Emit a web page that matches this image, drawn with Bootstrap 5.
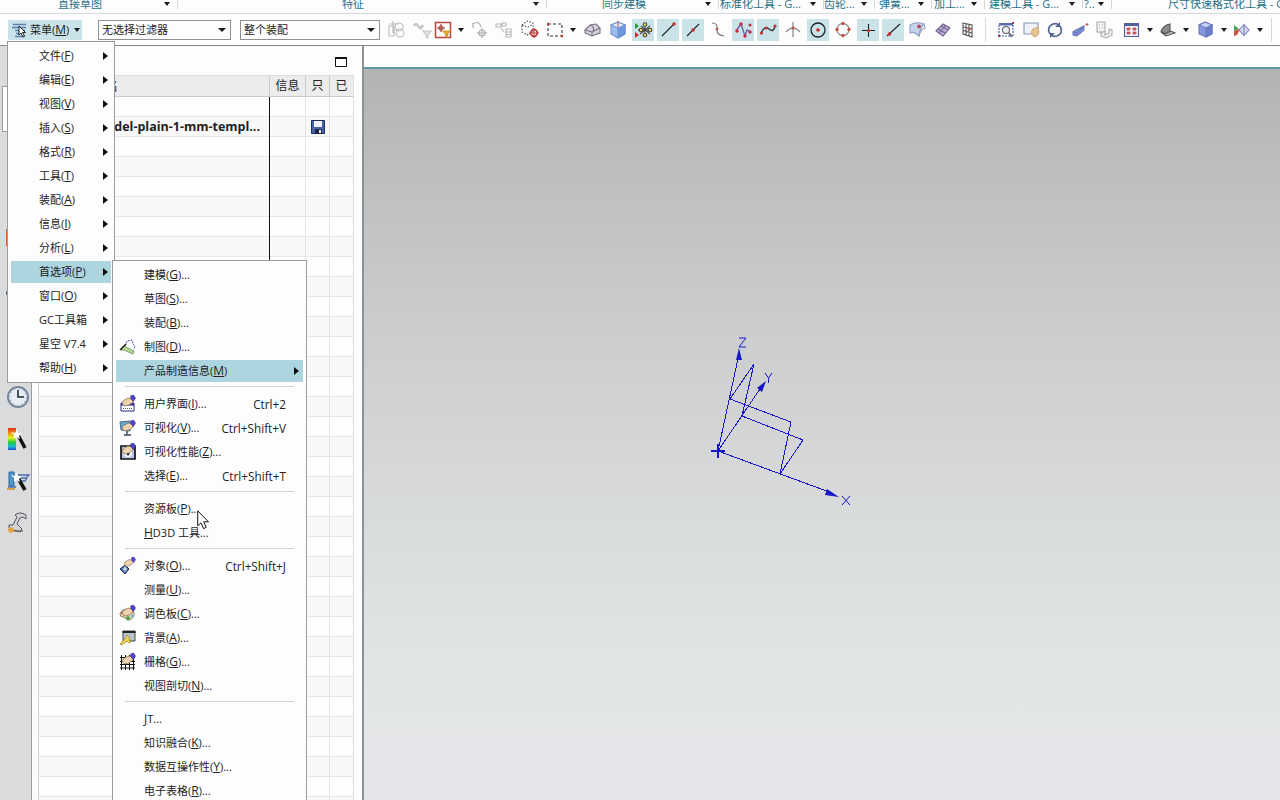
<!DOCTYPE html>
<html lang="zh-CN">
<head>
<meta charset="utf-8">
<title>NX</title>
<link href="https://cdn.jsdelivr.net/npm/bootstrap@5.3.0/dist/css/bootstrap.min.css" rel="stylesheet">
<style>
body{width:1280px;height:800px;overflow:hidden;background:#fdfdfd;color:#222;font:11px/16px "Open Sans","Noto Sans CJK SC",sans-serif}
svg{display:block;overflow:visible}
u{text-underline-offset:1px;font-size:12px}
.ribbon{height:14px;border-bottom:1px solid #d5d8da;display:grid;grid-template-columns:178px 369px 172px 105px 51px 57px 53px 98px 29px 1fr;color:#1d7086}
.grp{border-right:1px solid #d5d8da;height:9px;line-height:10px;white-space:nowrap;padding-right:7px}
.grp .lbl{margin-top:-1px}
.grp .caret{margin-top:2px}
.caret{width:0;height:0;border:3px solid transparent;border-top:4px solid #1a1a1a;border-bottom:0}
.toolbar{height:32px;border-bottom:1px solid #85898c}
.menu-btn{margin-left:8px;width:74px;height:20px;background:#c9e3e8;padding:0 2px 0 3px}
.combo{height:20px;border:1px solid #8f9193;padding:0 4px 0 3px;background:#fdfdfd}
.combo .caret{border-width:4px 4px 0}
.icons{display:grid;grid-template-columns:24px 28px 14px 20px 20px 28px 24px 26px 8px 4px repeat(16,25px) 10px 32px 18px 30px 20px 28px 26px 10px 28px 6px 34px 2px 34px 2px 22px;justify-items:center;align-items:center;height:31px;margin-left:4px}
.icons svg{width:22px;height:22px;fill:none;stroke-width:1.1}
.icons .on{background:#c9e3e8}
.icons .caret{position:relative;left:1px}
.vr1{width:1px;height:24px;background:#d5d8da}
.rail{width:32px;background:#dadbdc;border-right:1px solid #9a9c9e;padding-top:337px}
.rail svg{margin:0 0 16px 6px}
.part-nav{width:332px;border-right:2px solid #8b9297;padding-left:6px;background:#fdfdfd}
.tree{width:316px;border-left:1px solid #cfd1d3;border-right:1px solid #dcdee0}
.trow{display:grid;grid-template-columns:231px 36px 24px 1fr;height:20px;border-bottom:1px solid #e6e7e8}
.trow:nth-child(odd){background:#f8f8f8}
.trow>div{border-right:1px solid #e3e4e6;display:flex;align-items:center;justify-content:center}
.trow>div:first-child{border-right-color:#111;margin-bottom:-1px}
.trow>div:last-child{border-right:0}
.trow.thead-row{height:22px;background:#ececec;border-top:1px solid #dcdcdc;border-bottom:1px solid #ccc;font-size:12px}
.trow.thead-row>div,.trow.thead-row>div:first-child{border-right-color:#c9cbcd}
.part-name{font-weight:700;font-size:12.5px;white-space:nowrap}
.scene{background:linear-gradient(#b2b4b4 0,#c0c2c2 18%,#cbcdce 36%,#d7d9da 58%,#e2e5e6 81%,#e5e6e9 100%);border-top:2px solid #5d97a5}
.pop{position:absolute;background:#fdfdfd;border:1px solid #9a9c9e;padding:2px 3px}
.mi{height:24px;display:flex;align-items:center;padding:0 3px 0 28px;white-space:nowrap;border:solid #fdfdfd;border-width:1px 0}
.mi.hot{background:#acd5df}
.tri{margin-left:auto;border:4px solid transparent;border-left:5px solid #111;border-right:0}
.pop2 .mi{padding-right:17px}
.pop2 .mi.hot{padding-right:4px}
.pop2 .mi svg{width:18px;height:18px;margin:0 7px 0 -25px}
.key{margin-left:auto;font-size:11.75px}
.rule{height:9px;padding:3px 9px 0}
.rule:before{content:"";display:block;border-top:1px solid #cfd1d3}
</style>
</head>
<body class="d-flex flex-column position-relative">
<svg width="0" height="0" class="position-absolute"><defs>
<g id="hand"><path d="M4 6l5-3 4 1 1 3-4 3-4 1-3-2z" fill="#ecd2ae" stroke="#8a6d4a" stroke-width=".7"/><path d="M11.500 1l3-1 2 3-2 3.500-2.500-2.500z" fill="#5145c8" stroke="#29238e" stroke-width=".5"/></g>
</defs></svg>

<div class="ribbon flex-shrink-0">
<div class="grp d-flex justify-content-between" style="padding-left:58px"><span class="lbl">直接草图</span><i class="caret"></i></div>
<div class="grp d-flex justify-content-between" style="padding-left:164px"><span class="lbl">特征</span><i class="caret"></i></div>
<div class="grp d-flex justify-content-between" style="padding-left:55px"><span class="lbl">同步建模</span><i class="caret"></i></div>
<div class="grp d-flex justify-content-between" style="padding-left:1px"><span class="lbl">标准化工具 - G...</span><i class="caret"></i></div>
<div class="grp d-flex justify-content-between ps-0"><span class="lbl">齿轮...</span><i class="caret"></i></div>
<div class="grp d-flex justify-content-between" style="padding-left:4px"><span class="lbl">弹簧...</span><i class="caret"></i></div>
<div class="grp d-flex justify-content-between" style="padding-left:2px"><span class="lbl">加工...</span><i class="caret"></i></div>
<div class="grp d-flex justify-content-between" style="padding-left:4px"><span class="lbl">建模工具 - G...</span><i class="caret"></i></div>
<div class="grp d-flex justify-content-between" style="padding-left:1px"><span class="lbl">?..</span><i class="caret"></i></div>
<div class="grp border-0" style="padding-left:56px"><div class="lbl">尺寸快速格式化工具 - G...</div></div>
</div>

<div class="toolbar d-flex align-items-center flex-shrink-0">
<div class="menu-btn d-flex align-items-center flex-shrink-0">
<svg width="17" height="16" viewBox="0 0 17 16" fill="none" stroke="#5a7fae" stroke-width="1.500"><path d="M2 2.500h13M1 5.500h3M4 8.500h10M5 11.500h4M4 14.500h10M4 5.500h11"/><path d="M8 4v9l2-2 2 4 1.500-1-2-3.500h3z" fill="#fff" stroke="#222" stroke-width="1"/></svg>
<span style="margin-left:2px">菜单(<u>M</u>)</span><i class="caret ms-auto"></i></div>
<div class="vr1" style="margin-left:4px"></div>
<div class="combo d-flex align-items-center justify-content-between flex-shrink-0" style="margin-left:12px;width:133px">无选择过滤器<i class="caret"></i></div>
<div class="combo d-flex align-items-center justify-content-between flex-shrink-0" style="margin-left:9px;width:140px">整个装配<i class="caret"></i></div>
<div class="icons flex-shrink-0">
<svg viewBox="0 0 22 22" stroke="#bbb"><path d="M4 7h5v10H4zM8 2v12M4 5h9"/><circle cx="14" cy="8" r="4"/><circle cx="15" cy="14" r="4"/></svg>
<svg viewBox="0 0 22 22" stroke="#c4c4c4"><path d="M3 7q2-4 4 0t5-1" stroke-width="2.500"/><path d="M10 7v4M12 12h8l-3 4v3l-2-1v-2z" fill="#e6e6e6"/></svg>
<svg viewBox="0 0 22 22" stroke="#b9483e"><path d="M3.500 3.500h15v15h-15z" stroke-width="1.500"/><path d="M9 5v8M5 9h8" stroke="#813a34"/><circle cx="9" cy="9" r="2"/><path d="M11 12h7l-2.500 3v3l-2-1v-2z" fill="#e9ae36" stroke="#d89a25"/></svg>
<i class="caret"></i>
<svg viewBox="0 0 22 22" stroke="#aaa"><path d="M13 9v10M8 14h10M4 9V4M4 5q6-4 8 3"/><circle cx="13" cy="14" r="3"/></svg>
<svg viewBox="0 0 22 22" stroke="#b5b5b5"><path d="M3 5h5v3H3zM9 4h4v3H9zM8 9l3 4M13 10h5v8h-5zM13 13h5M13 15.500h5"/></svg>
<svg viewBox="0 0 22 22" stroke="#444"><path d="M3 6l5-4 6 2v9l-6 3-5-3zM3 6l6 2 5-3" stroke-dasharray="1.500 1.500"/><path d="M15 9v10M10 14h10" stroke="#bd4040"/><circle cx="15" cy="14" r="3.300" stroke="#bd4040" stroke-width="1.700"/></svg>
<svg viewBox="0 0 22 22" stroke="#333"><path d="M4 5h14v12H4z" stroke-dasharray="3 2"/><path d="M3 5h2M17 17h2" stroke="#bc3d36" stroke-width="2.500"/></svg>
<i class="caret"></i><i></i>
<svg viewBox="0 0 22 22" stroke="#777085"><path d="M3 11l5-5 6-1 4 4v5l-8 3-7-3z" fill="#d5cedd"/><path d="M3 11l7 2 8-4M10 13v4M8 6q5 1 3 7"/></svg>
<svg viewBox="0 0 22 22" stroke="#6f93d4"><path d="M4 6l7-3 7 3v9l-7 4-7-4z" fill="#9dbdf2"/><path d="M11 9v10l7-4V6z" fill="#6f97dd"/><path d="M4 6l7-3 7 3-7 3z" fill="#e6eefc"/><path d="M11 2v6" stroke="#b45d5d"/></svg>
<svg class="on" viewBox="0 0 22 22" stroke="#444"><path d="M6 11h14M13 4v13M9 7l9 8M18 7L8 15"/><g fill="#f0d94e"><circle cx="13" cy="5.500" r="1.800"/><circle cx="13" cy="16" r="1.800"/><circle cx="9" cy="11" r="1.800"/><circle cx="18" cy="11" r="1.800"/></g><path d="M3 4l4 3-4 3z" fill="#269b42" stroke="none"/><path d="M3 13l4 3-4 3z" fill="#ca2b2b" stroke="none"/></svg>
<svg class="on" viewBox="0 0 22 22" stroke="#222"><path d="M5 17L17 5"/><circle cx="17" cy="5" r="1.700" fill="#c13131" stroke="none"/></svg>
<svg class="on" viewBox="0 0 22 22" stroke="#222"><path d="M5 17L17 5"/><circle cx="11" cy="11" r="1.800" fill="#c13131" stroke="none"/></svg>
<svg viewBox="0 0 22 22" stroke="#777"><path d="M5 4q6 0 5 6t7 7"/><circle cx="10" cy="10" r="1.500" fill="#a96054" stroke="none"/></svg>
<svg class="on" viewBox="0 0 22 22" stroke="#6a55ad"><path d="M4 12l5-7 4 12 2-6 4 2" stroke-width="1.300"/><g fill="#c32f3e" stroke="none"><circle cx="5" cy="12" r="1.700"/><circle cx="9" cy="5" r="1.700"/><circle cx="13" cy="17" r="1.700"/><circle cx="18" cy="6" r="1.500"/><circle cx="18" cy="13" r="1.700"/></g></svg>
<svg class="on" viewBox="0 0 22 22" stroke="#333"><path d="M4 15q3-9 8-5t6-3" stroke-width="1.400"/><g fill="#c13131" stroke="none"><circle cx="4.500" cy="14" r="1.600"/><circle cx="9" cy="9" r="1.500"/><circle cx="18" cy="7" r="1.600"/></g></svg>
<svg viewBox="0 0 22 22" stroke="#777"><path d="M11 3v15M4 13q7-8 14 0"/><circle cx="11" cy="9" r="1.600" fill="#b15b50" stroke="none"/></svg>
<svg class="on" viewBox="0 0 22 22" stroke="#222"><circle cx="11" cy="11" r="7" stroke-width="1.300"/><circle cx="11" cy="11" r="1.800" fill="#c13131" stroke="none"/></svg>
<svg viewBox="0 0 22 22" stroke="#888"><circle cx="11" cy="10.500" r="6"/><g fill="#bd5044" stroke="none"><circle cx="11" cy="4.500" r="1.700"/><circle cx="11" cy="16.500" r="1.700"/><circle cx="5" cy="10.500" r="1.700"/><circle cx="17" cy="10.500" r="1.700"/></g></svg>
<svg class="on" viewBox="0 0 22 22" stroke="#222"><path d="M11.500 5v13M5 11.500h13"/><circle cx="11.500" cy="11.500" r="1.500" fill="#c13131" stroke="none"/></svg>
<svg class="on" viewBox="0 0 22 22" stroke="#222"><path d="M5 17L18 5"/><circle cx="7.500" cy="15" r="1.800" fill="#c13131" stroke="none"/></svg>
<svg viewBox="0 0 22 22" stroke="#8ba0c4"><path d="M3 6q6-4 14-1-4 4-5 12-5-5-9-3z" fill="#c5d6ec"/><path d="M17 5l1 4q-4 1-6 8" /><circle cx="12" cy="7.500" r="1.900" fill="#c14b54" stroke="none"/></svg>
<svg viewBox="0 0 22 22" stroke="#71638f"><path d="M4 12l7-7 7 4-7 8z" fill="#bcaed8"/><path d="M6 10l7 4M9 7l7 4M7 14l7-8"/></svg>
<svg viewBox="0 0 22 22" stroke="#555"><path d="M6 4l9 2v12l-9-3zM9 5v11M12 5.500v11.500M6 8l9 2M6 11.500l9 2.500"/><circle cx="12" cy="10" r="1.500" fill="#a55" stroke="none"/></svg>
<div class="vr1"></div>
<svg viewBox="0 0 22 22" stroke="#666"><path d="M4 6v11M18 6v11M4 17h12" stroke="#3f5ba5" stroke-dasharray="2 1"/><path d="M4 4h14v2.500H4z" fill="#5770b5" stroke="none"/><circle cx="11" cy="11" r="3.500" fill="#e7f0f4"/><path d="M14 14l3 4" stroke-width="2"/><path d="M3 16h2v2H3zM17 3h2v2h-2z" fill="#9d3949" stroke="none"/></svg>
<svg viewBox="0 0 22 22" stroke="#8796b1"><path d="M4 4h14v11H4z" fill="#edf1f8"/><path d="M11 13l2-3 5-2 1 6-3 4-3-1z" fill="#e6c592" stroke="#c9a26c" stroke-width=".8"/></svg>
<svg viewBox="0 0 22 22" stroke="#52658c"><path d="M6 15q-4-7 3-10 4-1 6 1M16 7q4 7-3 10-4 1-6-1" stroke-width="1.700"/><path d="M16 3v5h-5zM6 19v-5h5z" fill="#52658c" stroke="none"/></svg>
<svg viewBox="0 0 22 22" stroke="#6a78b8" stroke-width=".8"><path d="M4 13l3-2 8-4v4l-7 6-4-1z" fill="#7f90dd"/><path d="M4 13l4 1 7-7M8 14v3"/><path d="M18 4v3M16.500 5.500h3" stroke="#c75151"/></svg>
<svg viewBox="0 0 22 22" stroke="#aaa"><path d="M4 3h8v10H4zM6 6h1M9 6h1M6 9h1M9 9h1M8 14l4-2v4l4-2v-4l3 1v5l-6 3-5-2z" fill="#f3f3f3"/></svg>
<svg viewBox="0 0 22 22" stroke="#556199"><path d="M4.500 4.500h14v13h-14z" fill="#edf0fa"/><path d="M4 5.500h15" stroke-width="3"/><path d="M7 9h3v2H7zM13 9h3v2h-3zM7 13h3v2H7zM13 13h3v2h-3z" fill="#d45b5b" stroke="#c94848" stroke-width=".7"/></svg>
<i class="caret"></i>
<svg viewBox="0 0 22 22" stroke="#555"><path d="M4 12q3-6 9-7v7l-5 3z" fill="#8b8b8b"/><path d="M4 13l5 4 9-3-4-2-6 3z" fill="#b5b5b5"/></svg>
<i class="caret"></i>
<svg viewBox="0 0 22 22" stroke="#6b79bc"><path d="M5 6l6-3 7 3v9l-6 3-7-3z" fill="#8797dd"/><path d="M12 9v9l6-3V6z" fill="#6c7fcf"/><path d="M5 6l6-3 7 3-6 3z" fill="#c5cef5"/></svg>
<i class="caret"></i>
<svg viewBox="0 0 22 22" stroke="#7b82b9"><path d="M9 11l5-5.500 5 5.500-5 5.500z" fill="#d5d9f0"/><path d="M14 6v11"/><path d="M4 6l5 4-5 2z" fill="#46a653" stroke="none"/><path d="M4 12l6-2-3 6-3 1z" fill="#c95040" stroke="none"/></svg>
<i class="caret"></i>
<div class="vr1"></div>
</div>
</div>

<div class="d-flex flex-grow-1" style="min-height:0">
<div class="rail flex-shrink-0">
<svg width="24" height="28" viewBox="0 0 24 28"><circle cx="12" cy="14" r="10" fill="#e6edf5" stroke="#77879a" stroke-width="2"/><circle cx="12" cy="14" r="8" fill="none" stroke="#8091a5" stroke-dasharray="1 3.200"/><path d="M12 7v7h6" fill="none" stroke="#192b3d" stroke-width="1.600"/></svg>
<svg width="24" height="26" viewBox="0 0 24 26"><defs><linearGradient id="rain" x2="0" y2="1"><stop stop-color="#e32b16"/><stop offset=".25" stop-color="#f49c13"/><stop offset=".45" stop-color="#e5ef26"/><stop offset=".65" stop-color="#22cf37"/><stop offset=".85" stop-color="#1fb7d8"/><stop offset="1" stop-color="#2146cf"/></linearGradient></defs><path d="M2 1h8v22H2z" fill="url(#rain)"/><path d="M12 8l7 13" stroke="#111" stroke-width="3.500"/><path d="M11 2l1 4 4 0-3 3 1 3-4-2-2 2V8L5 5l4 1z" fill="#fff"/></svg>
<svg width="24" height="26" viewBox="0 0 24 26"><path d="M3 3h5v14H3z" fill="#5594c8" stroke="#24689b"/><path d="M2 18h8M10 6h13l-3 3h-7M13 12h6l2-3" stroke="#496cad" stroke-width="1.300" fill="none"/><path d="M1 20h8" stroke="#d2a146" stroke-width="2"/><path d="M12 9l7 12" stroke="#111" stroke-width="3.500"/><path d="M11 3l1 4 4 0-3 3 1 3-4-2-2 2V9L5 6l4 1z" fill="#fff"/></svg>
<svg width="24" height="26" viewBox="0 0 24 26"><path d="M9 4q5-4 11 0v4l-3-2-3 1-3 6 5 5-2 3-7-2-4-2v-3l4 0 4-8z" fill="#d2d3d5" stroke="#55575b"/><circle cx="5" cy="19" r="2.800" fill="#e5a33c"/><path d="M8 20h9" stroke="#555"/></svg>
</div>
<div class="part-nav flex-shrink-0">
<div class="d-flex justify-content-end" style="height:29px;padding:11px 15px 0 0"><svg width="12" height="10"><path d="M.5 .5h11v9H.5z" fill="none" stroke="#111"/><path d="M0 1h12" stroke="#111" stroke-width="2"/></svg></div>
<div class="tree" id="tree">
<div class="trow thead-row"><div style="justify-content:flex-start;padding-left:67px">名</div><div>信息</div><div>只</div><div>已</div></div>
<div class="trow"><div></div><div></div><div></div><div></div></div>
<div class="trow"><div class="part-name" style="justify-content:flex-end;padding-right:9px"><span>model-plain-1-mm-templ...</span></div><div></div><div><svg width="14" height="14"><path d="M.5.5h13v13H.5z" fill="#4a62ad" stroke="#202e5c"/><path d="M3 1h8v6H3z" fill="#eef2f8"/><path d="M4 9h7v5H4z" fill="#1d2745"/><path d="M8 10h2v3H8z" fill="#fff"/></svg></div><div></div></div>
</div>
</div>
<div class="d-flex flex-column flex-grow-1">
<div style="height:21px;background:#fdfdfd"></div>
<div class="scene flex-grow-1">
<svg width="916" height="731" viewBox="364 69 916 731" fill="none" stroke="#1818c4"><path d="M718 451L739 354M718 451L762 386M718 451L832 493M730 399L754 364 742 416M730 399L791 422 780 474M742 416L803 440 780 474" shape-rendering="crispEdges"/><path d="M711 451h14M718 444v14" stroke-width="2"/><path d="M739 348l-3 12h6zM766 381l-9 7 5 4zM839 497l-12-8-2 6z" fill="#1818c4" stroke="none"/><path d="M739 338h7l-7 9h7M765 373l3.500 5 3.500-5M768.500 378v5M842 496l8 9M850 496l-8 9"/></svg>
</div>
</div>
</div>

<svg class="position-absolute" style="left:2px;top:86px" width="6" height="220"><path d="M5.500.5h-5v45h5" fill="#fdfdfd" stroke="#999"/><path d="M5 143v17" stroke="#d06d2c" stroke-width="2"/><path d="M6 203q-3 4 0 8" fill="none" stroke="#27446b"/></svg>

<nav class="pop" style="left:7px;top:41px;width:108px;height:342px">
<div class="mi">文件(<u>F</u>)<i class="tri"></i></div>
<div class="mi">编辑(<u>E</u>)<i class="tri"></i></div>
<div class="mi">视图(<u>V</u>)<i class="tri"></i></div>
<div class="mi">插入(<u>S</u>)<i class="tri"></i></div>
<div class="mi">格式(<u>R</u>)<i class="tri"></i></div>
<div class="mi">工具(<u>T</u>)<i class="tri"></i></div>
<div class="mi">装配(<u>A</u>)<i class="tri"></i></div>
<div class="mi">信息(<u>I</u>)<i class="tri"></i></div>
<div class="mi">分析(<u>L</u>)<i class="tri"></i></div>
<div class="mi hot">首选项(<u>P</u>)<i class="tri"></i></div>
<div class="mi">窗口(<u>O</u>)<i class="tri"></i></div>
<div class="mi">GC工具箱<i class="tri"></i></div>
<div class="mi">星空 V7.4<i class="tri"></i></div>
<div class="mi">帮助(<u>H</u>)<i class="tri"></i></div>
</nav>

<nav class="pop pop2" style="left:112px;top:260px;width:195px;height:560px">
<div class="mi">建模(<u>G</u>)...</div>
<div class="mi">草图(<u>S</u>)...</div>
<div class="mi">装配(<u>B</u>)...</div>
<div class="mi"><svg viewBox="0 0 18 18"><path d="M6 8l2-5 5-1 1 4 2 2-1 3" fill="#fff" stroke="#4c54b5" stroke-dasharray="2 1"/><path d="M5 8l10 5-1 3-9-4-3 0z" fill="#b9dc93" stroke="#6a8a57" stroke-width=".8"/><path d="M1 12l6-6" stroke="#222" stroke-width="1.500"/></svg>制图(<u>D</u>)...</div>
<div class="mi hot">产品制造信息(<u>M</u>)<i class="tri"></i></div>
<div class="rule"></div>
<div class="mi"><svg viewBox="0 0 18 18"><path d="M2 8h13v8H2z" fill="#fff" stroke="#242487"/><path d="M2 9.500h13" stroke="#242487" stroke-width="2"/><path d="M4 13.500h9" stroke="#555" stroke-dasharray="1 1"/><use href="#hand"/></svg>用户界面(<u>I</u>)...<span class="key">Ctrl+2</span></div>
<div class="mi"><svg viewBox="0 0 18 18"><path d="M1 3l10-1v10l-9-1z" fill="#67a8d2" stroke="#4b6b8a"/><path d="M8 12v4M5 16h7" stroke="#65738a" stroke-width="2"/><use href="#hand" y="1"/></svg>可视化(<u>V</u>)...<span class="key">Ctrl+Shift+V</span></div>
<div class="mi"><svg viewBox="0 0 18 18"><path d="M2 3h14v13H2z" fill="#b7c6e9" stroke="#111" stroke-width="1.700"/><circle cx="9" cy="10" r="4" fill="#fff"/><path d="M7 10h4l-2 3z" fill="#111"/><use href="#hand"/></svg>可视化性能(<u>Z</u>)...</div>
<div class="mi">选择(<u>E</u>)...<span class="key">Ctrl+Shift+T</span></div>
<div class="rule"></div>
<div class="mi">资源板(<u>P</u>)...</div>
<div class="mi"><span><u>H</u>D3D 工具...</span></div>
<div class="rule"></div>
<div class="mi"><svg viewBox="0 0 18 18"><path d="M1 12l5-4 4 4-4 5z" fill="#4f71ae" stroke="#1d315a"/><path d="M6 9.500v5M4 12h4" stroke="#fff"/><use href="#hand" x="3" transform="scale(.85)"/></svg>对象(<u>O</u>)...<span class="key">Ctrl+Shift+J</span></div>
<div class="mi">测量(<u>U</u>)...</div>
<div class="mi"><svg viewBox="0 0 18 18"><path d="M1 9q1-5 8-5 7 1 6 6-2 6-7 5-1-3-4-3-3 0-3-3z" fill="#e6d3a8" stroke="#796952" stroke-width=".8"/><circle cx="9" cy="13" r="1.800" fill="#309d4a"/><circle cx="13" cy="11" r="1.500" fill="#77baf0"/><circle cx="3.500" cy="8" r="1.300" fill="#c83d32"/><use href="#hand"/></svg>调色板(<u>C</u>)...</div>
<div class="mi"><svg viewBox="0 0 18 18"><path d="M4 2h12v10H4z" fill="#b9c3ce" stroke="#444"/><path d="M3.500 3h13" stroke="#222" stroke-width="2"/><path d="M8 6l3 3-1 2 2 2-2 1-2-2-5 4-2-1 5-5z" fill="#ecd44d" stroke="#a08a32" stroke-width=".8"/></svg>背景(<u>A</u>)...</div>
<div class="mi"><svg viewBox="0 0 18 18"><path d="M2.500 2v15M6.500 2v15M10.500 2v15M14.500 2v15M1 4.500h15M1 8.500h15M1 11.500h15M1 15h15" stroke="#111"/><use href="#hand"/></svg>栅格(<u>G</u>)...</div>
<div class="mi">视图剖切(<u>N</u>)...</div>
<div class="rule"></div>
<div class="mi"><u>J</u>T...</div>
<div class="mi">知识融合(<u>K</u>)...</div>
<div class="mi">数据互操作性(<u>Y</u>)...</div>
<div class="mi">电子表格(<u>R</u>)...</div>
</nav>
<svg class="position-absolute" style="left:197px;top:510px" width="13" height="20" viewBox="0 0 13 20"><path d="M.7.800v15l3.300-3 2.500 5.800 2.700-1.200-2.500-5.600h4.800z" fill="#fff" stroke="#111"/></svg>

<script>
// Fill the navigator with empty rows down to the window's lower edge
const tree=document.getElementById('tree');
for(let i=0;i<34;i++){const r=document.createElement('div');r.className='trow';r.innerHTML='<div></div><div></div><div></div><div></div>';tree.append(r)}
</script>
<script src="https://cdn.jsdelivr.net/npm/bootstrap@5.3.0/dist/js/bootstrap.bundle.min.js"></script>
</body>
</html>
